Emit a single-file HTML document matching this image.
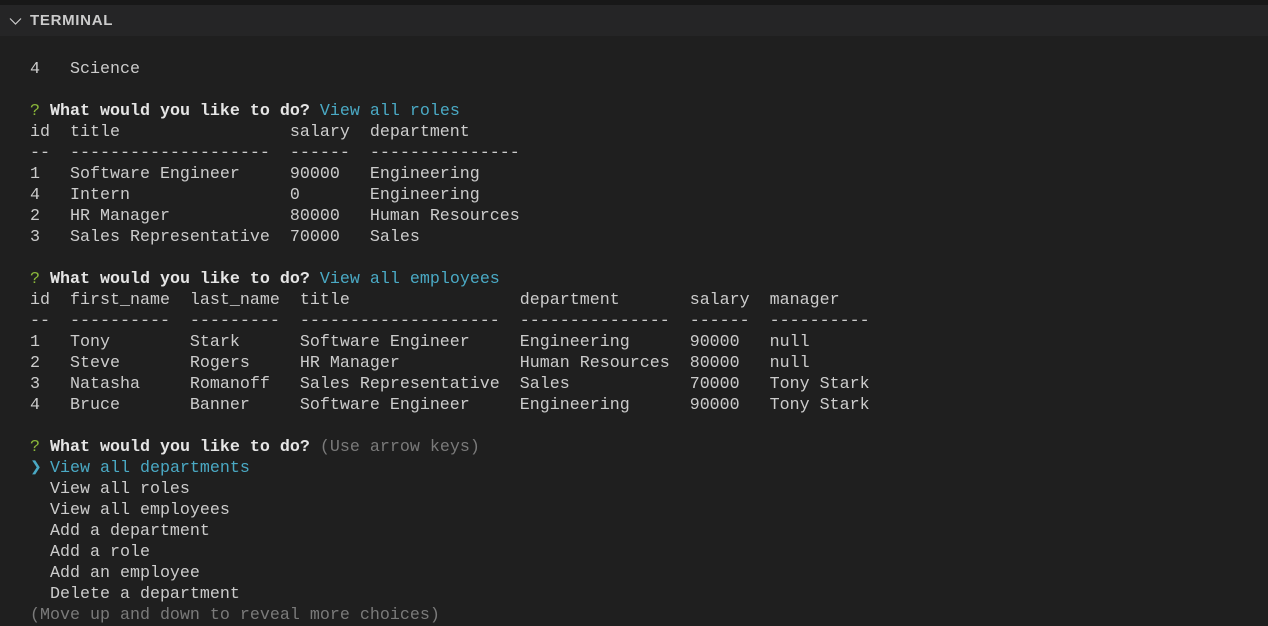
<!DOCTYPE html><html><head><style>
body{margin:0;width:1268px;height:620px;background:#1f1f1f;overflow:hidden;font-family:"Liberation Mono",monospace}
.top{height:5px;background:#181818}
.hd{height:31px;background:#252526;color:#cccccc;font:bold 15px "Liberation Sans",sans-serif;display:flex;align-items:center;letter-spacing:.7px}
.hd svg{margin:0 7px 0 8px}
pre{position:absolute;top:59px;left:30px;margin:0;font-size:16.67px;line-height:21px;color:#cccccc;font-family:"Liberation Mono",monospace}
.g{color:#8bb83a}.b{font-weight:bold;color:#e5e5e5}.c{color:#4aa9c4}.d{color:#7a7a7a}
.ar{display:inline-block;width:10px;overflow:hidden;font-size:14px;vertical-align:top}
</style></head><body><div class="top"></div>
<div class="hd"><svg width="15" height="14" viewBox="0 0 15 14"><path d="M2 4.5l5.5 5.5 5.5-5.5" stroke="#cccccc" stroke-width="1.2" fill="none"/></svg>TERMINAL</div>
<pre>4   Science

<span class="g">?</span> <span class="b">What would you like to do?</span> <span class="c">View all roles</span>
id  title                 salary  department
--  --------------------  ------  ---------------
1   Software Engineer     90000   Engineering
4   Intern                0       Engineering
2   HR Manager            80000   Human Resources
3   Sales Representative  70000   Sales

<span class="g">?</span> <span class="b">What would you like to do?</span> <span class="c">View all employees</span>
id  first_name  last_name  title                 department       salary  manager
--  ----------  ---------  --------------------  ---------------  ------  ----------
1   Tony        Stark      Software Engineer     Engineering      90000   null
2   Steve       Rogers     HR Manager            Human Resources  80000   null
3   Natasha     Romanoff   Sales Representative  Sales            70000   Tony Stark
4   Bruce       Banner     Software Engineer     Engineering      90000   Tony Stark

<span class="g">?</span> <span class="b">What would you like to do?</span> <span class="d">(Use arrow keys)</span>
<span class="c"><span class="ar">❯</span> View all departments</span>
  View all roles
  View all employees
  Add a department
  Add a role
  Add an employee
  Delete a department
<span class="d">(Move up and down to reveal more choices)</span></pre>
</body></html>
